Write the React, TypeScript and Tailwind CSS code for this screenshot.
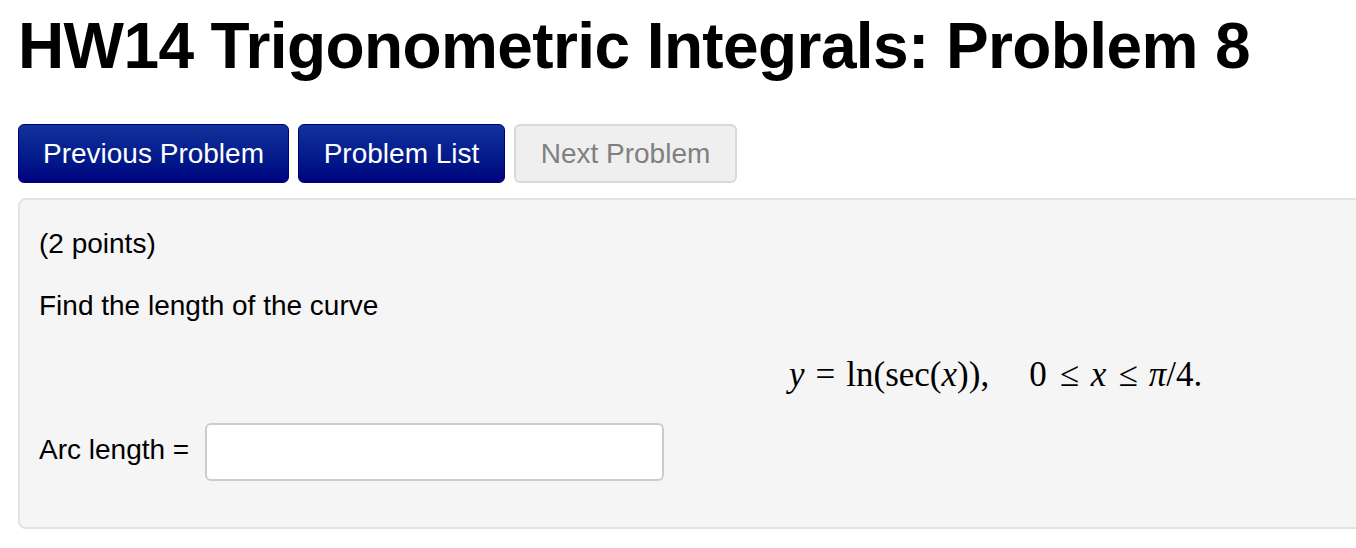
export default function App() {
  return (
    <div
      className="w-full overflow-hidden bg-white pl-[18px] text-black"
      style={{ fontFamily: '"Liberation Sans", Arial, Helvetica, sans-serif' }}
    >
      {/* 제목 */}
      <h1 className="mt-[14px] text-[64px] font-bold leading-none tracking-[-0.6px] whitespace-nowrap">
        HW14 Trigonometric Integrals: Problem 8
      </h1>

      {/* 이동 버튼 */}
      <div className="mt-[46px] flex gap-[9px]">
        <button className="flex h-[59px] w-[271px] items-center justify-center rounded-[6px] border border-[#00006e] bg-linear-to-b from-[#14319c] to-[#00007f] text-[28px] leading-none text-white">
          Previous Problem
        </button>
        <button className="flex h-[59px] w-[207px] items-center justify-center rounded-[6px] border border-[#00006e] bg-linear-to-b from-[#14319c] to-[#00007f] text-[28px] leading-none text-white">
          Problem List
        </button>
        <button
          disabled
          className="flex h-[59px] w-[223px] items-center justify-center rounded-[6px] border-2 border-[#d9d9d9] bg-[#efefef] text-[28px] leading-none text-[#808080]"
        >
          Next Problem
        </button>
      </div>

      {/* 문제 본문 */}
      <div className="mt-[15px] w-[1500px] rounded-[8px] border-2 border-[#e3e3e3] bg-[#f5f5f5] pb-[46px] pl-[19px] pt-[24px] text-[28px] leading-[40px]">
        <p className="mb-[22px]">(2 points)</p>
        <p>Find the length of the curve</p>

        <div
          className="ml-[750px] mt-[29px] flex items-baseline whitespace-nowrap text-[35px] leading-[40px]"
          style={{ fontFamily: '"Liberation Serif", "Times New Roman", serif' }}
        >
          <span className="italic">y</span>
          <span className="mx-[11px]">=</span>
          <span>ln(sec(</span>
          <span className="italic">x</span>
          <span>)),</span>
          <span className="ml-[40px] mr-[13px]">0</span>
          <span>≤</span>
          <span className="mx-[12px] italic">x</span>
          <span>≤</span>
          <span className="ml-[11px] italic">π</span>
          <span>/4.</span>
        </div>

        <div className="mt-[28px] flex items-center gap-[16px]">
          <span className="pb-[5px]">Arc length =</span>
          <input
            type="text"
            className="h-[58px] w-[459px] rounded-[6px] border-2 border-[#cccccc] bg-white px-3 outline-none"
          />
        </div>
      </div>
    </div>
  );
}
